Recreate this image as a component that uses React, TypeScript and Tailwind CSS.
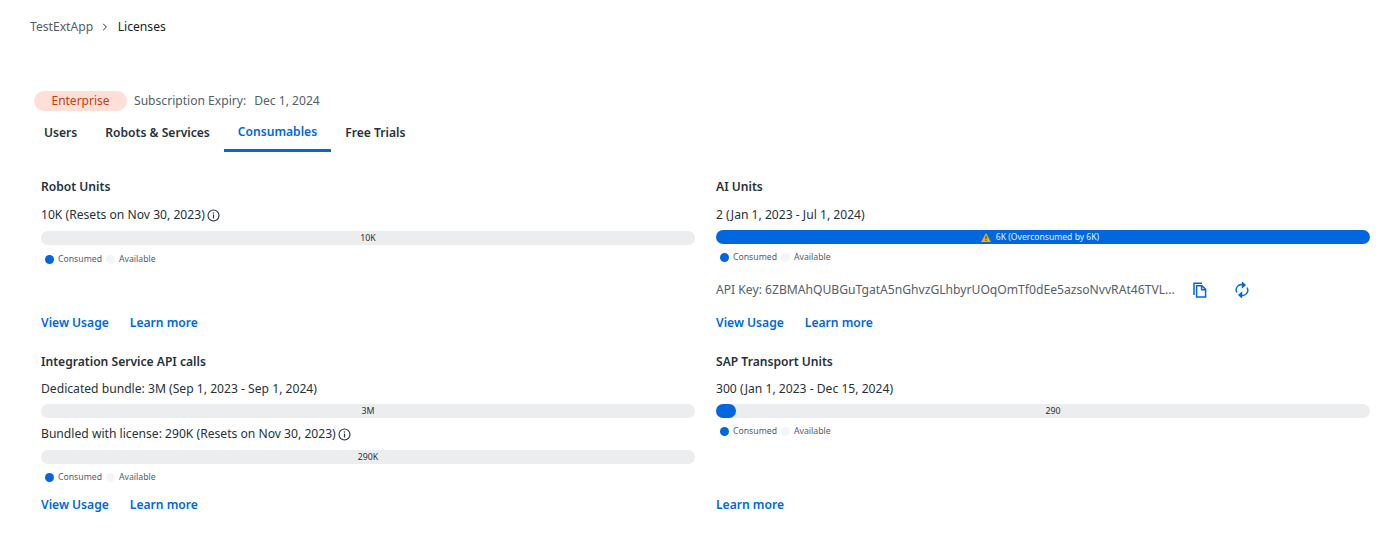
import React from 'react';

const Info = () => (
  <svg width="13" height="13" viewBox="0 0 13 13" fill="none" className="shrink-0">
    <circle cx="6.5" cy="6.5" r="5.5" stroke="#273139" strokeWidth="1.1" />
    <rect x="5.9" y="5.6" width="1.2" height="3.8" fill="#273139" />
    <rect x="5.9" y="3.4" width="1.2" height="1.2" fill="#273139" />
  </svg>
);

const Bar = ({ label, filled = false }: { label: string; filled?: boolean }) => (
  <div className="h-[14px] rounded-full bg-[#ecedef] flex items-center text-[8.8px] leading-none text-[#273139]">
    {filled && <div className="h-[14px] w-[20px] rounded-full bg-[#0067df]" />}
    <span className="flex-1 text-center">{label}</span>
  </div>
);

const Legend = ({ className = '' }: { className?: string }) => (
  <div className={`flex items-center h-[14px] pl-1 text-[8.7px] leading-none text-[#526069] ${className}`}>
    <span className="w-[9px] h-[9px] rounded-full bg-[#0067df] mr-[4px]" />
    <span>Consumed</span>
    <span className="w-[9px] h-[9px] rounded-full bg-[#f4f5f7] ml-[4px] mr-[4px]" />
    <span>Available</span>
  </div>
);

const Links = ({ usage = true }: { usage?: boolean }) => (
  <div className="mt-auto flex gap-[21px] text-[12.1px] leading-[16px] font-semibold text-[#0067df]">
    {usage && <a>View Usage</a>}
    <a>Learn more</a>
  </div>
);

const Title = ({ children }: { children: React.ReactNode }) => (
  <h3 className="text-[12.1px] leading-[16px] font-semibold text-[#273139]">{children}</h3>
);

const Line = ({ children, className = '' }: { children: React.ReactNode; className?: string }) => (
  <p className={`flex items-center gap-[2px] text-[12.13px] leading-[16px] text-[#273139] ${className}`}>{children}</p>
);

export default function App() {
  return (
    <div className="w-[1380px] h-[550px] bg-white overflow-hidden font-['Noto_Sans',sans-serif]">
      {/* Breadcrumb */}
      <div className="flex items-center pl-[30px] pt-[19px] text-[12.15px] leading-[16px]">
        <span className="text-[#526069]">TestExtApp</span>
        <svg width="6" height="8" viewBox="0 0 6 8" fill="none" className="ml-[9px] mr-[9.5px]">
          <path d="M1.2 0.8L4.4 4L1.2 7.2" stroke="#273139" strokeWidth="1" />
        </svg>
        <span className="text-[#182027]">Licenses</span>
      </div>

      {/* Plan */}
      <div className="flex items-center pl-[34px] mt-[56px]">
        <span className="w-[93px] h-[20px] rounded-full bg-[#ffe0d7] flex items-center justify-center text-[12px] text-[#c73a12]">
          Enterprise
        </span>
        <span className="ml-[7px] text-[12.1px] text-[#526069]">Subscription Expiry:</span>
        <span className="ml-[8px] text-[12.1px] text-[#526069]">Dec 1, 2024</span>
      </div>

      {/* Tabs */}
      <div className="flex pl-[30px] mt-[1px] text-[12.1px] leading-[16px] font-semibold text-[#273139]">
        <div className="h-[40px] px-[14px] pt-[13px]">Users</div>
        <div className="h-[40px] px-[14px] pt-[13px]">Robots &amp; Services</div>
        <div className="h-[40px] px-[14px] pt-[12px] text-[#0067df] border-b-[3px] border-[#0067df]">Consumables</div>
        <div className="h-[40px] px-[14px] pt-[13px]">Free Trials</div>
      </div>

      {/* Cards */}
      <div className="grid grid-cols-2 gap-x-[21px] pl-[41px] pr-[10px] mt-[27px] grid-rows-[152px_159px] gap-y-[23px]">
        <section className="flex flex-col">
          <Title>Robot Units</Title>
          <Line className="mt-[12px]">10K (Resets on Nov 30, 2023) <Info /></Line>
          <div className="mt-[8px]"><Bar label="10K" /></div>
          <Legend className="mt-[7px]" />
          <Links />
        </section>

        <section className="flex flex-col">
          <Title>AI Units</Title>
          <Line className="mt-[12px]">2 (Jan 1, 2023 - Jul 1, 2024)</Line>
          <div className="mt-[7px] h-[14px] rounded-full bg-[#0067df] flex items-center justify-center gap-[5px] pr-[6px] text-[8.6px] leading-none text-[#e8f1fd]">
            <svg width="10" height="9" viewBox="0 0 10 9">
              <path d="M5 0L10 9H0Z" fill="#fbab0c" />
              <rect x="4.5" y="3" width="1" height="3" fill="#273139" />
              <rect x="4.5" y="6.8" width="1" height="1" fill="#273139" />
            </svg>
            <span>6K (Overconsumed by 6K)</span>
          </div>
          <Legend className="mt-[6px]" />
          <div className="flex items-center mt-[16px] h-[20px]">
            <span className="w-[459px] whitespace-nowrap text-[12.13px] text-[#526069]">
              API Key: 6ZBMAhQUBGuTgatA5nGhvzGLhbyrUOqOmTf0dEe5azsoNvvRAt46TVL...
            </span>
            <svg width="16" height="16" viewBox="0 0 16 16" fill="none" className="ml-[17px]" stroke="#0067df" strokeWidth="1.5">
              <path d="M2 13V1.2H10" />
              <path d="M4.6 3.8H10L13.6 7.4V15H4.6Z" />
              <path d="M9.6 3.8V7.8H13.6" />
            </svg>
            <svg width="16" height="16" viewBox="0 0 16 16" fill="none" className="ml-[26px]" stroke="#0067df" strokeWidth="1.4">
              <path d="M3 10.5A5.2 5.2 0 0 1 9.5 3" />
              <path d="M13 5.5A5.2 5.2 0 0 1 6.5 13" />
              <path d="M8.5 0.8L11 3L8.5 5.2Z" fill="#0067df" />
              <path d="M7.5 10.8L5 13L7.5 15.2Z" fill="#0067df" />
            </svg>
          </div>
          <Links />
        </section>

        <section className="flex flex-col">
          <Title>Integration Service API calls</Title>
          <Line className="mt-[11px]">Dedicated bundle: 3M (Sep 1, 2023 - Sep 1, 2024)</Line>
          <div className="mt-[7px]"><Bar label="3M" /></div>
          <Line className="mt-[8px]">Bundled with license: 290K (Resets on Nov 30, 2023) <Info /></Line>
          <div className="mt-[8px]"><Bar label="290K" /></div>
          <Legend className="mt-[6px]" />
          <Links />
        </section>

        <section className="flex flex-col">
          <Title>SAP Transport Units</Title>
          <Line className="mt-[11px]">300 (Jan 1, 2023 - Dec 15, 2024)</Line>
          <div className="mt-[7px]"><Bar label="290" filled /></div>
          <Legend className="mt-[6px]" />
          <Links usage={false} />
        </section>
      </div>
    </div>
  );
}
